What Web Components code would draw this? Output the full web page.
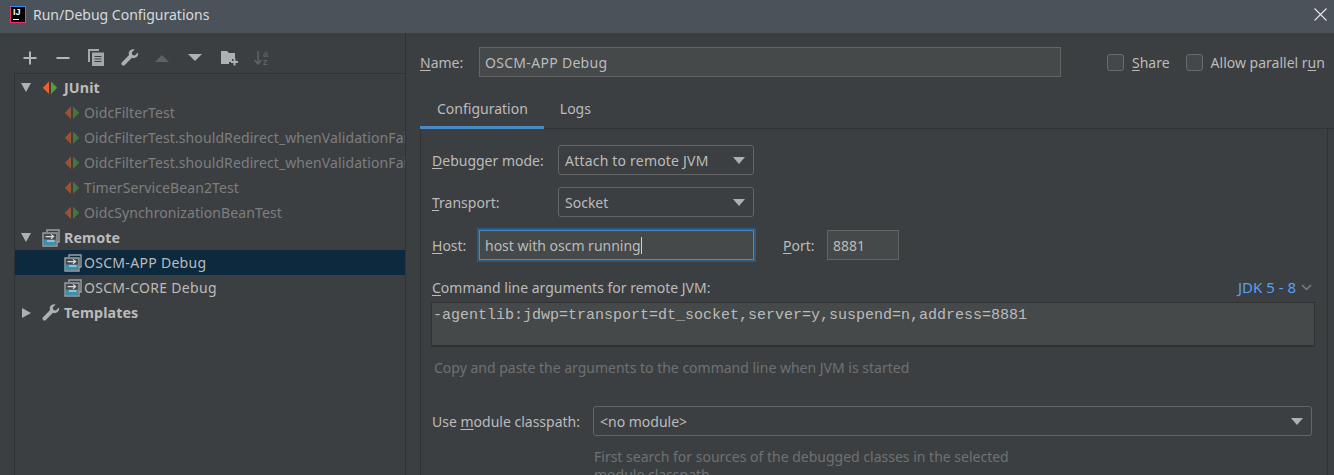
<!DOCTYPE html>
<html><head><meta charset="utf-8">
<style>
html,body{margin:0;padding:0;height:100%;overflow:hidden;background:#3c3f41}
body{font:14px "Noto Sans","Open Sans",sans-serif;color:#bbbbbb}
</style></head><body>
<run-debug-dialog></run-debug-dialog>
<script>
function def(name, css, html){
  customElements.define(name, class extends HTMLElement{
    constructor(){super();const s=this.attachShadow({mode:'open'});
      s.innerHTML='<style>'+css+'</style>'+(typeof html==='function'?html(this):html);}
  });
}
const F='"Noto Sans","Open Sans",sans-serif';
const ICON={
 junit:(o)=>`<svg width="16" height="16" viewBox="0 0 16 16" style="opacity:${o}"><path d="M7 1.5V14L.8 7.8z" fill="#e8622a"/><path d="M9 1.5V14L15.2 7.8z" fill="#4fa03c"/></svg>`,
 remote:`<svg width="18" height="18" viewBox="0 0 18 18"><path d="M5 3V1h12v12h-2" fill="none" stroke="#9aa0a4" stroke-width="1.4"/><path d="M1 4h14v13H1z" fill="#46494b" stroke="#9aa0a4" stroke-width="1.4"/><path d="M2 10.5h12V16H2z" fill="#3d8fb0"/><path d="M3.5 7.6h8M9 5.4l2.6 2.2L9 9.8" fill="none" stroke="#d8dcdf" stroke-width="1.2"/><path d="M12.5 12H5" stroke="#d8dcdf" stroke-width="1.2"/></svg>`,
 wrench:`<svg width="18" height="18" viewBox="0 0 18 18"><path d="M17 3.6l-3.2 3-2.4-.7-.7-2.4L13.6.4C11.2-.3 8.2 1 7.8 3.8c-.1.9 0 1.6.3 2.2L1 13.2c-.8.8-.8 2 0 2.8.8.8 2 .8 2.8 0l7.2-7.2c.7.3 1.4.4 2.2.3 2.8-.4 4.5-3 3.8-5.5z" fill="#aeb1b3"/></svg>`
};
def('ij-title',`:host{display:flex;align-items:center;height:33px;box-sizing:border-box;padding-bottom:4px;background:#4b5259;color:#d8dadb;font:14px ${F}}
 .logo{margin-left:10px;width:16px;height:17px;background:#000;position:relative;box-sizing:border-box;border:1px solid;border-color:#2f8fe8 #2f8fe8 #e8336a #e8336a;font:bold 9px/10px "Liberation Sans",sans-serif;color:#fff;padding-left:2px;flex:none}
 .logo i{position:absolute;left:2px;bottom:2px;width:6px;height:1px;background:#fff}
 .t{margin-left:7px;flex:1}
 svg{margin-right:7px}`,
 `<div class="logo">IJ<i></i></div><div class="t"><slot></slot></div><svg width="13" height="13" viewBox="0 0 13 13"><path d="M.5.5l12 12M12.5.5l-12 12" stroke="#e4e6e7" stroke-width="1.1"/></svg>`);

def('ij-toolbar',`:host{display:flex;align-items:center;height:40px;box-sizing:border-box;padding:10px 0 0 22px}
 span{width:33px;height:20px;display:flex;align-items:center;justify-content:flex-start;flex:none}`,
 `<span><svg width="16" height="16" viewBox="0 0 16 16"><path d="M8 1.5v13M1.5 8h13" stroke="#b4b7b9" stroke-width="2"/></svg></span>
 <span><svg width="16" height="16" viewBox="0 0 16 16"><path d="M1.5 8h13" stroke="#b4b7b9" stroke-width="2"/></svg></span>
 <span><svg width="18" height="18" viewBox="0 0 18 18"><path d="M0 0h11v2H2v11H0z" fill="#a5a8aa"/><path d="M4 3.5h12V17H4z" fill="#a5a8aa"/><path d="M6.5 7.5h7M6.5 10h7M6.5 12.5h7" stroke="#3c3f41"/></svg></span>
 <span><svg width="18" height="18" viewBox="0 0 18 18"><path d="M17 3.6l-3.2 3-2.4-.7-.7-2.4L13.6.4C11.2-.3 8.2 1 7.8 3.8c-.1.9 0 1.6.3 2.2L1 13.2c-.8.8-.8 2 0 2.8.8.8 2 .8 2.8 0l7.2-7.2c.7.3 1.4.4 2.2.3 2.8-.4 4.5-3 3.8-5.5z" fill="#aeb1b3"/></svg></span>
 <span><svg width="16" height="16" viewBox="0 0 16 16"><path d="M1 12L8 5l7 7z" fill="#5f6264"/></svg></span>
 <span><svg width="16" height="16" viewBox="0 0 16 16"><path d="M1 4h14l-7 7z" fill="#aeb1b3"/></svg></span>
 <span><svg width="19" height="18" viewBox="0 0 19 18"><path d="M1 2h6l2 2h6v6h-3v3H9v2H1z" fill="#aeb1b3"/><path d="M14.5 9.5v7M11 13h7" stroke="#aeb1b3" stroke-width="2"/></svg></span>
 <span><svg width="18" height="18" viewBox="0 0 18 18"><path d="M5 2v13M1.5 11L5 15l3.5-4" fill="none" stroke="#5f6264" stroke-width="1.6"/><text x="10" y="8" font-size="9" font-weight="bold" fill="#5f6264" font-family="Liberation Sans">a</text><text x="10" y="16" font-size="9" font-weight="bold" fill="#5f6264" font-family="Liberation Sans">z</text></svg></span>`);

def('ij-tree',`:host{display:block;margin-left:14px;border-top:1px solid #323232;border-left:1px solid #323232;height:402px;padding-top:1px;overflow:hidden;box-sizing:border-box}`,`<slot></slot>`);

def('ij-row',`:host{display:flex;align-items:center;height:25px;white-space:nowrap;overflow:hidden;font:14px ${F};letter-spacing:.1px;color:#bbbbbb}
 :host([sel]){background:#0d293e}
 :host([dim]){color:#7c7e80}
 :host([caps]){letter-spacing:.3px}
 :host([bold]){font-weight:700;font-size:14.3px}
 .a{width:20px;flex:none;display:flex;justify-content:center;padding-left:1px;box-sizing:border-box}
 .ind{width:49px;flex:none}
 .ic{flex:none;display:flex;width:20px;height:18px;align-items:center}
 .gap{width:7px;flex:none}`,
 (e)=>{
  const c=e.hasAttribute('child');
  const arrow=e.getAttribute('arrow');
  const a=arrow==='d'?'<svg width="12" height="11" viewBox="0 0 12 11"><path d="M1 1h10L6 10z" fill="#aeb1b3"/></svg>':'<svg width="12" height="12" viewBox="0 0 12 12"><path d="M2 1v10l9-5z" fill="#aeb1b3"/></svg>';
  const k=e.getAttribute('icon');
  const ic=k==='junit'?ICON.junit(c?0.55:1):ICON[k];
  return (c?'<span class="ind"></span>':`<span class="a">${a}</span><span class="gap"></span>`)+`<span class="ic" style="${c?'':'width:22px'}">${ic}</span><slot></slot>`;
 });

def('ij-label',`:host{display:inline-block;font:14px ${F};color:#bbbbbb;white-space:nowrap;padding-top:1px}`,`<slot></slot>`);

def('ij-input',`:host{display:flex;flex:none;align-items:center;box-sizing:border-box;background:#45494a;border:1px solid #646464;height:30px;padding:1px 0 0 5px;font:14px ${F};color:#bbbbbb;white-space:nowrap}
 :host([focus]){outline:2px solid #2d5b80;outline-offset:0;border-color:#4a88c7}
 i{display:inline-block;width:1px;height:17px;background:#d0d0d0}`,
 (e)=>`<slot></slot>${e.hasAttribute('focus')?'<i></i>':''}`);

def('ij-combo',`:host{display:flex;align-items:center;justify-content:space-between;box-sizing:border-box;height:30px;border:1px solid #646464;border-radius:3px;padding:0 8px 0 6px;font:14px ${F};color:#bbbbbb;white-space:nowrap}
 span{padding-top:1px}`,
 `<span><slot></slot></span><svg width="12" height="7" viewBox="0 0 12 7"><path d="M0 0h12L6 7z" fill="#aeb1b3"/></svg>`);

def('ij-check',`:host{display:inline-flex;flex:none;align-items:center;gap:8px;font:14px ${F};color:#bbbbbb;white-space:nowrap}
 b{display:block;width:15px;height:15px;border:1px solid #6b6b6b;border-radius:3px;background:#43494a}`,`<b></b><span><slot></slot></span>`);

def('ij-tabs',`:host{display:flex;height:34px;margin-top:18px;box-sizing:border-box;border-bottom:1px solid #323232;font:14px ${F};color:#bbbbbb}`,`<slot></slot>`);
def('ij-tab',`:host{display:flex;align-items:center;box-sizing:border-box;padding:0 16px 7px 16px;height:34px;margin-bottom:-1px}
 :host([active]){border-bottom:3px solid #4a88c7;padding:0 16px 4px 17px}`,`<slot></slot>`);

def('ij-config',`:host{display:block;box-sizing:border-box;margin-right:6px;border-left:1px solid #323232;border-right:1px solid #323232;padding:16px 15px 0 11px;height:360px}
 .r{display:flex;align-items:center}
 .area{box-sizing:border-box;height:45px;margin:5px -3px 0 -1px;background:#45494a;border:1px solid #323232;border-bottom-width:2px;padding:4px 1px;white-space:nowrap;font:15px "Liberation Mono",monospace;color:#bbb}
 .jdk{display:flex;align-items:center;flex:none;color:#589df6}
 .jdk span{font:15px ${F};margin-right:5px;white-space:pre}
 u{text-underline-offset:2px}`,
 `<div class="r" style="height:30px"><ij-label style="width:126px"><u>D</u>ebugger mode:</ij-label><ij-combo style="width:196px;letter-spacing:.2px">Attach to remote JVM</ij-combo></div>
 <div class="r" style="height:30px;margin-top:12px"><ij-label style="width:126px"><u>T</u>ransport:</ij-label><ij-combo style="width:196px">Socket</ij-combo></div>
 <div class="r" style="height:30px;margin-top:13px"><ij-label style="width:47px"><u>H</u>ost:</ij-label><ij-input focus style="width:275px">host with oscm running</ij-input><ij-label style="margin-left:29px;width:44px"><u>P</u>ort:</ij-label><ij-input style="width:72px">8881</ij-input></div>
 <div class="r" style="height:20px;margin-top:17px;justify-content:space-between"><ij-label><u>C</u>ommand line arguments for remote JVM:</ij-label><div class="jdk"><span>JDK 5 - 8</span><svg width="11" height="7" viewBox="0 0 11 7"><path d="M1 1l4.5 4.5L10 1" fill="none" stroke="#7b7e80" stroke-width="1.5"/></svg></div></div>
 <div class="area">-agentlib:jdwp=transport=dt_socket,server=y,suspend=n,address=8881</div>
 <ij-label style="color:#6e7173;margin:10px 0 0 2px;display:block">Copy and paste the arguments to the command line when JVM is started</ij-label>
 <div class="r" style="height:30px;margin-top:29px"><ij-label style="width:161px">Use <u>m</u>odule classpath:</ij-label><ij-combo style="flex:1">&lt;no module&gt;</ij-combo></div>
 <ij-label style="color:#6e7173;margin:11px 0 0 162px;display:block;white-space:normal;width:460px;line-height:18px">First search for sources of the debugged classes in the selected module classpath</ij-label>`);

def('run-debug-dialog',`:host{display:block;width:1334px;height:475px;overflow:hidden;background:#3c3f41}
 .main{display:grid;grid-template-columns:405px 1fr;height:442px}
 .right{padding:14px 0 0 14px;min-width:0;box-sizing:border-box;border-left:1px solid #323232}
 .name{display:flex;align-items:center;height:30px;font:14px ${F}}
 u{text-underline-offset:2px}`,
 `<ij-title>Run/Debug Configurations</ij-title>
 <div class="main">
  <div>
   <ij-toolbar></ij-toolbar>
   <ij-tree>
    <ij-row arrow="d" icon="junit" bold>JUnit</ij-row>
    <ij-row child dim icon="junit">OidcFilterTest</ij-row>
    <ij-row child dim icon="junit">OidcFilterTest.shouldRedirect_whenValidationFails</ij-row>
    <ij-row child dim icon="junit">OidcFilterTest.shouldRedirect_whenValidationFails</ij-row>
    <ij-row child dim icon="junit">TimerServiceBean2Test</ij-row>
    <ij-row child dim icon="junit">OidcSynchronizationBeanTest</ij-row>
    <ij-row arrow="d" icon="remote" bold>Remote</ij-row>
    <ij-row child sel caps icon="remote">OSCM-APP Debug</ij-row>
    <ij-row child caps icon="remote">OSCM-CORE Debug</ij-row>
    <ij-row arrow="r" icon="wrench" bold>Templates</ij-row>
   </ij-tree>
  </div>
  <div class="right">
   <div class="name"><ij-label style="width:59px;flex:none"><u>N</u>ame:</ij-label><ij-input style="width:582px;letter-spacing:.3px">OSCM-APP Debug</ij-input><ij-check style="margin-left:46px"><u>S</u>hare</ij-check><ij-check style="margin-left:16px">Allow parallel r<u>u</u>n</ij-check></div>
   <ij-tabs><ij-tab active>Configuration</ij-tab><ij-tab>Logs</ij-tab></ij-tabs>
   <ij-config></ij-config>
  </div>
 </div>`);
</script>
</body></html>
